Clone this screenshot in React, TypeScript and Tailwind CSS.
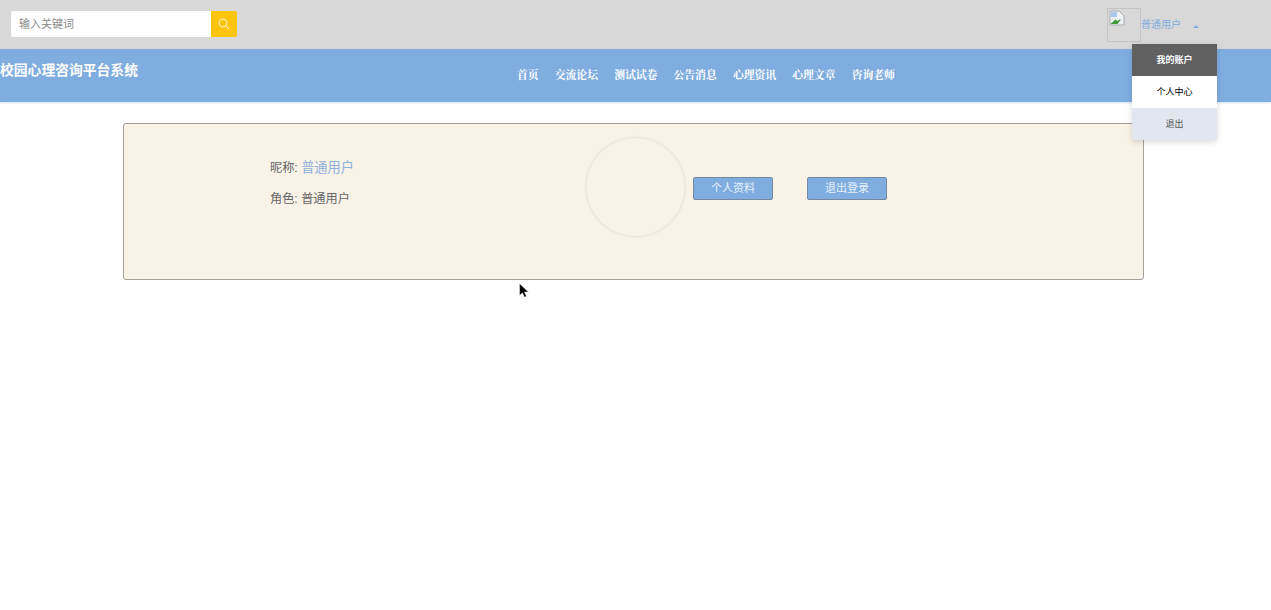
import React from "react";

const navItems = ["首页", "交流论坛", "测试试卷", "公告消息", "心理资讯", "心理文章", "咨询老师"];

export default function App() {
  return (
    <div className="relative h-[610px] w-[1271px] overflow-hidden bg-white font-['Liberation_Sans','Noto_Sans_CJK_SC',sans-serif]">
      <header className="flex h-[49px] items-start justify-between bg-[#d8d8d8]">
        <div className="ml-[11px] mt-[11px] flex h-[26px] w-[226px]">
          <div className="flex h-[26px] w-[200px] items-center rounded-l-[2px] bg-white pl-2 text-[11px] text-[#8a8a8a]">输入关键词</div>
          <div className="flex h-[26px] w-[26px] items-center justify-center rounded-r-[2px] bg-[#ffc40d]">
            <svg width="12" height="12" viewBox="0 0 12 12" fill="none" stroke="#fff3c8" strokeWidth="1">
              <circle cx="5" cy="5" r="4" />
              <path d="M8 8l3.2 3.2" />
            </svg>
          </div>
        </div>
        <div className="mr-[72px] mt-2 flex items-center">
          <div className="h-[34px] w-[34px] border border-[#c4c4c4] p-px">
            <svg width="16" height="16" viewBox="0 0 16 16">
              <path d="M1 1h9l5 5v9H1z" fill="#eef1f4" stroke="#a8aeb4" strokeWidth="1" />
              <path d="M1.5 14l5-4.5 2 1.5 3-2v1l-3 4z" fill="#3f9a34" />
              <path d="M2 2h6v5H2z" fill="#a9c8ee" />
            </svg>
          </div>
          <span className="w-[40px] whitespace-nowrap text-[10px] leading-[34px] text-[#7fade0]">普通用户</span>
          <svg className="ml-3 mt-[3px]" width="6" height="3" viewBox="0 0 6 3">
            <path d="M3 0l3 3H0z" fill="#7fade0" />
          </svg>
        </div>
      </header>

      <nav className="flex h-[53px] items-start bg-[#7fade0] shadow-[0_1px_2px_rgba(127,173,224,0.35)]">
        <div className="mt-[12px] w-[517px] whitespace-nowrap text-[13.8px] font-bold leading-[20px] text-white">校园心理咨询平台系统</div>
        <ul className="mt-[18px] flex gap-[16.2px]">
          {navItems.map((item) => (
            <li key={item} className="whitespace-nowrap font-['Liberation_Serif','Noto_Serif_CJK_SC','Noto_Sans_CJK_SC',serif] text-[10.8px] font-bold leading-[17px] text-white">
              {item}
            </li>
          ))}
        </ul>
      </nav>

      <main className="ml-[123px] mt-[21px] flex h-[157px] w-[1021px] items-start rounded-[3px] border border-[#a3a19c] bg-[#f8f2e7]">
        <div className="ml-[146px] mt-[33px] w-[316px] text-[12.2px] text-[#666]">
          <div className="h-[21px] leading-[21px]">
            昵称: <span className="text-[13.2px] text-[#8fb0dc]">普通用户</span>
          </div>
          <div className="mt-[11px] leading-[21px]">角色: 普通用户</div>
        </div>
        <div className="mt-[14px] h-[98px] w-[98px] translate-x-[0.5px] rounded-full bg-[#f8f2e7] shadow-[0_0_3px_rgba(90,80,70,0.2)]" />
        <button className="ml-[9px] mt-[53px] h-[23px] w-[80px] rounded-[2px] border border-[#74889f] bg-[#7fade0] text-[11px] text-[#e8f0f8]">个人资料</button>
        <button className="ml-[34px] mt-[53px] h-[23px] w-[80px] rounded-[2px] border border-[#74889f] bg-[#7fade0] text-[11px] text-[#e8f0f8]">退出登录</button>
      </main>

      <div className="absolute left-[1132px] top-[44px] w-[85px] text-center text-[9px] leading-[32px] shadow-[0_2px_6px_rgba(0,0,0,0.15)]">
        <div className="h-[32px] bg-[#606060] font-bold text-white">我的账户</div>
        <div className="h-[32px] bg-white text-black">个人中心</div>
        <div className="h-[32px] bg-[#e2e6ee] text-[#555]">退出</div>
      </div>

      <svg className="absolute left-[519px] top-[283px]" width="10" height="15" viewBox="0 0 10 15">
        <path d="M0.5 0.5v12l3-2.6 2 4.4 2-1-2-4.2h4z" fill="#000" stroke="#fff" strokeWidth="0.5" />
      </svg>
    </div>
  );
}
